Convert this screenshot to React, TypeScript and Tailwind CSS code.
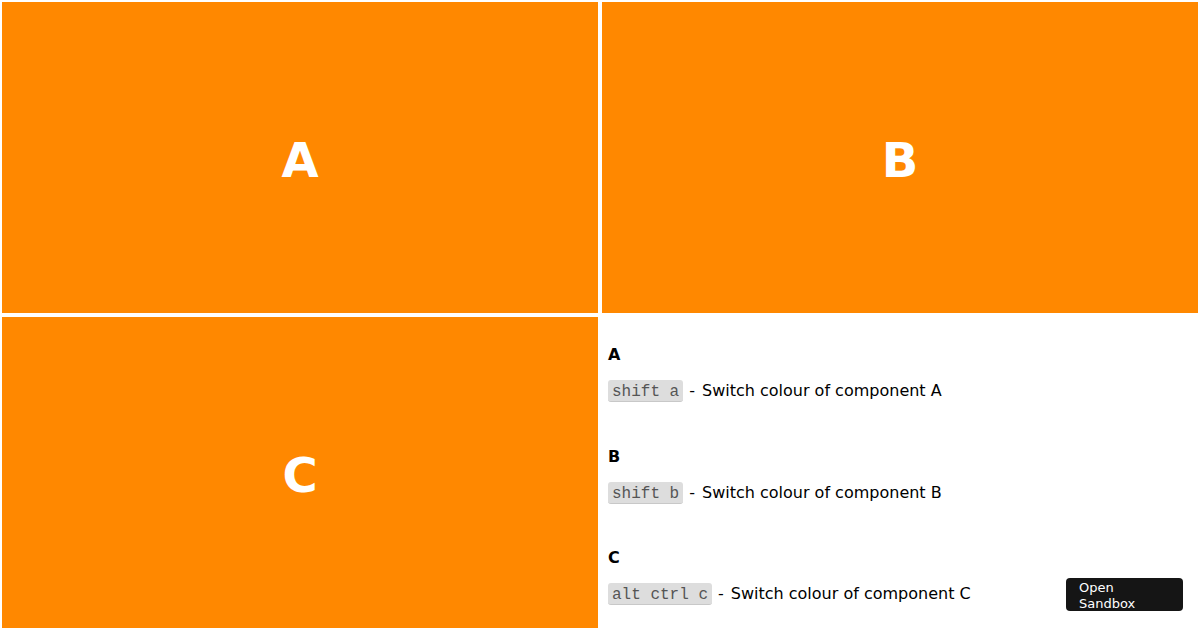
import React from "react";

const font = { fontFamily: '"DejaVu Sans", sans-serif' };

function Panel({ label }: { label: string }) {
  return (
    <div className="bg-[#ff8800] flex items-center justify-center">
      <span className="text-white font-bold text-[48px] leading-none mt-[4px]">{label}</span>
    </div>
  );
}

function Kbd({ children }: { children: React.ReactNode }) {
  return (
    <kbd
      className="inline-block h-[22px] px-[4px] pt-[2px] rounded-[3px] bg-[#dddddd] border-b border-[#c8c8c8] text-[16px] leading-[20px] text-[#555]"
      style={{ fontFamily: '"Courier New", Courier, "Liberation Mono", monospace' }}
    >
      {children}
    </kbd>
  );
}

const shortcuts = [
  { name: "A", keys: "shift a" },
  { name: "B", keys: "shift b" },
  { name: "C", keys: "alt ctrl c" },
];

export default function App() {
  return (
    <div
      className="relative w-[1200px] h-[630px] bg-white grid grid-cols-2 grid-rows-2 gap-[4px] p-[2px]"
      style={font}
    >
      <Panel label="A" />
      <Panel label="B" />
      <Panel label="C" />

      <div className="pt-[28px] pl-[6px] flex flex-col gap-[44.5px] text-black">
        {shortcuts.map(s => (
          <div key={s.name} className="flex flex-col gap-[15px]">
            <h4 className="text-[16px] font-bold leading-[20px]">{s.name}</h4>
            <p className="flex items-center h-[22px] text-[16px] leading-[20px] gap-[6px]">
              <Kbd>{s.keys}</Kbd>
              <span>
                -<span className="ml-[7px]">Switch colour of component {s.name}</span>
              </span>
            </p>
          </div>
        ))}
      </div>

      {/* Open Sandbox */}
      <button className="absolute right-[17px] bottom-[19px] w-[117px] h-[33px] rounded-[4px] bg-[#151515] text-white text-[13px] leading-[16px] text-left pl-[13px] pt-[2px]">
        Open
        <br />
        Sandbox
      </button>
    </div>
  );
}
